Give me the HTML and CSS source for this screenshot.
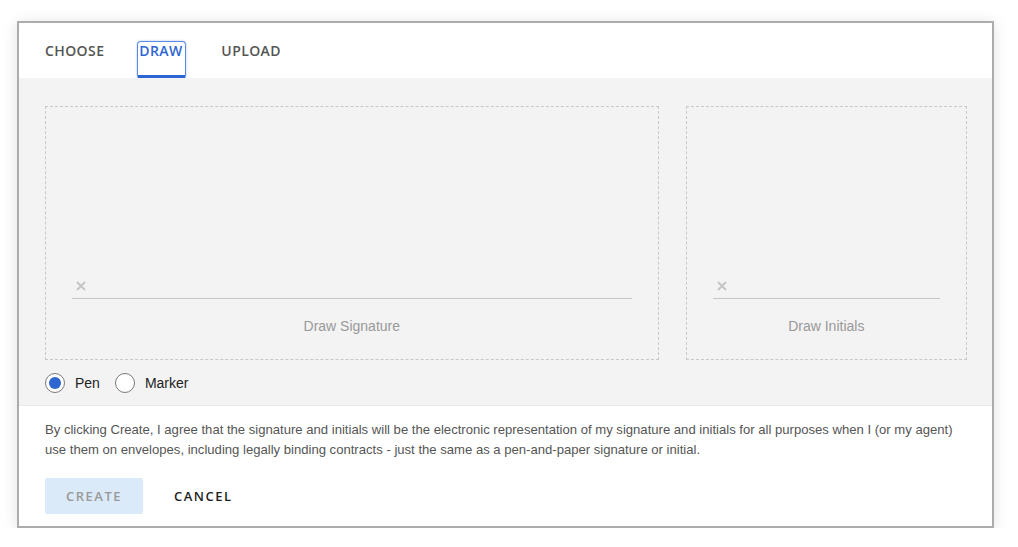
FILE: index.html
```html
<!DOCTYPE html>
<html lang="en">
<head>
    <meta charset="UTF-8">
    <meta name="viewport" content="width=device-width, initial-scale=1.0">
    <title>Adopt Signature</title>
    <link rel="stylesheet" href="styles.css">
</head>
<body>
    <div class="modal">
        <div class="tabs">
            <span class="tab">CHOOSE</span>
            <span class="tab active">DRAW</span>
            <span class="tab">UPLOAD</span>
        </div>
        <div class="draw-area">
            <div class="pads">
                <div class="pad pad-signature">
                    <div class="pad-line">
                        <svg class="pad-x" width="10" height="10" viewBox="0 0 10 10"><path d="M1 1 L9 9 M9 1 L1 9"/></svg>
                    </div>
                    <div class="pad-label">Draw Signature</div>
                </div>
                <div class="pad pad-initials">
                    <div class="pad-line">
                        <svg class="pad-x" width="10" height="10" viewBox="0 0 10 10"><path d="M1 1 L9 9 M9 1 L1 9"/></svg>
                    </div>
                    <div class="pad-label">Draw Initials</div>
                </div>
            </div>
            <div class="pen-options">
                <label class="radio">
                    <span class="radio-circle checked"></span>
                    Pen
                </label>
                <label class="radio">
                    <span class="radio-circle"></span>
                    Marker
                </label>
            </div>
        </div>
        <div class="footer">
            <p class="legal">By clicking Create, I agree that the signature and initials will be the electronic representation of my signature and initials for all purposes when I (or my agent) use them on envelopes, including legally binding contracts - just the same as a pen-and-paper signature or initial.</p>
            <div class="actions">
                <button class="btn btn-create" disabled>CREATE</button>
                <button class="btn btn-cancel">CANCEL</button>
            </div>
        </div>
    </div>
</body>
</html>
```

FILE: styles.css
```css
body {
    margin: 0;
    padding: 21px 0 0 17px;
    background: #fff;
    font-family: "Liberation Sans", Arial, sans-serif;
}
.modal {
    width: 973px;
    height: 503px;
    border: 2px solid #acacac;
    background: #fff;
    box-shadow: 0 2px 14px rgba(0, 0, 0, 0.12);
    display: flex;
    flex-direction: column;
}
.tabs {
    height: 55px;
    display: flex;
    align-items: flex-end;
    padding-left: 21px;
}
.tab {
    font-family: "Open Sans", sans-serif;
    font-weight: 600;
    font-size: 14px;
    letter-spacing: 0.4px;
    color: #555;
    padding: 2px 5px 0;
    height: 37px;
    margin-right: 24px;
    box-sizing: border-box;
    line-height: 16px;
}
.tab.active {
    color: #2d66d1;
    border: 1px solid #5b8ae6;
    border-bottom: 4px solid #2d66d1;
    border-radius: 4px;
    box-shadow: 0 0 2px rgba(45, 102, 209, 0.5);
    padding: 1px 1px 0;
    width: 49px;
    height: 38px;
    margin-right: 30px;
    margin-left: 4px;
    margin-bottom: -1px;
}
.draw-area {
    background: #f3f3f3;
    border-bottom: 1px solid #e8e8e8;
    padding: 28px 25px 0 26px;
    height: 299px;
}
.pads {
    display: flex;
    gap: 27px;
}
.pad {
    border: 1px dashed #c8c8c8;
    box-sizing: border-box;
    height: 254px;
    display: flex;
    flex-direction: column;
    justify-content: flex-end;
    padding: 0 26px 25px;
}
.pad-signature {
    width: 615px;
}
.pad-initials {
    width: 282px;
}
.pad-line {
    border-bottom: 1px solid #c6c6c6;
    height: 17px;
    padding-left: 4px;
}
.pad-x {
    display: block;
    stroke: #c4c4c4;
    stroke-width: 1.8;
    fill: none;
}
.pad-label {
    text-align: center;
    color: #999;
    font-size: 14px;
    margin-top: 19px;
    line-height: 16px;
}
.pen-options {
    display: flex;
    align-items: center;
    height: 46px;
}
.radio {
    display: flex;
    align-items: center;
    font-size: 14px;
    color: #222;
    margin-right: 15px;
}
.radio-circle {
    width: 20px;
    height: 20px;
    box-sizing: border-box;
    border: 1px solid #7a7a7a;
    border-radius: 50%;
    background: #fff;
    margin-right: 10px;
    position: relative;
}
.radio-circle.checked::after {
    content: '';
    position: absolute;
    top: 3px;
    left: 3px;
    width: 12px;
    height: 12px;
    border-radius: 50%;
    background: #2d66d1;
}
.footer {
    padding: 14px 26px 0 26px;
}
.legal {
    margin: 0;
    font-size: 13.1px;
    line-height: 20px;
    color: #555;
}
.actions {
    display: flex;
    align-items: center;
    margin-top: 18px;
}
.btn {
    font-family: "Open Sans", sans-serif;
    font-weight: 600;
    font-size: 13px;
    letter-spacing: 1.5px;
    border: none;
    border-radius: 2px;
    height: 36px;
    background: none;
    padding: 0;
}
.btn-create {
    width: 98px;
    background: #dbeaf8;
    color: #999;
}
.btn-cancel {
    margin-left: 31px;
    color: #1e1e1e;
}
```
